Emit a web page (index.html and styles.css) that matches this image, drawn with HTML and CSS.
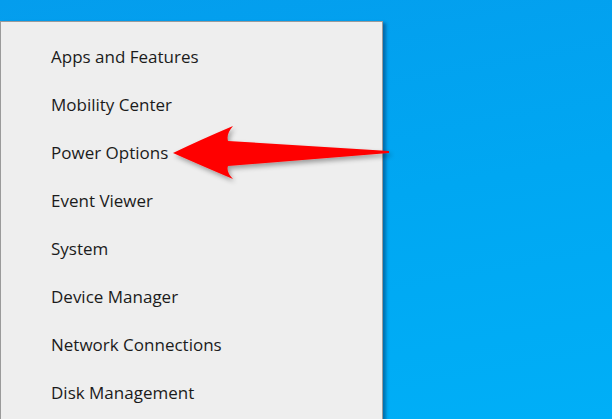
FILE: index.html
```html
<!DOCTYPE html>
<html>
<head>
<meta charset="utf-8">
<link rel="stylesheet" href="styles.css">
</head>
<body>
<div class="desktop">
  <div class="menu">
    <ul class="items">
      <li>Apps and Features</li>
      <li>Mobility Center</li>
      <li>Power Options</li>
      <li>Event Viewer</li>
      <li>System</li>
      <li>Device Manager</li>
      <li>Network Connections</li>
      <li>Disk Management</li>
    </ul>
  </div>
  <svg class="arrow" width="240" height="80" viewBox="0 0 240 80">
    <defs>
      <filter id="sh" x="-10%" y="-30%" width="120%" height="160%">
        <feGaussianBlur in="SourceAlpha" stdDeviation="2.5"/>
        <feOffset dx="2" dy="3" result="b"/>
        <feComponentTransfer><feFuncA type="linear" slope="0.35"/></feComponentTransfer>
        <feMerge><feMergeNode/><feMergeNode in="SourceGraphic"/></feMerge>
      </filter>
    </defs>
    <path filter="url(#sh)" fill="#ff0000" d="M13 43 Q40 30 73 16 Q66 24 68 31 L229 41 L229 43 L68 56 Q66 62 73 69 Q40 55 13 43 Z"/>
  </svg>
</div>
</body>
</html>
```
FILE: styles.css
```css
html, body {
  margin: 0;
  padding: 0;
}
.desktop {
  position: relative;
  width: 612px;
  height: 419px;
  overflow: hidden;
  background: linear-gradient(170deg, #049ded 0%, #00a7f2 50%, #00aff7 100%);
  padding-top: 21px;
  box-sizing: border-box;
}
.menu {
  width: 383px;
  height: 420px;
  box-sizing: border-box;
  background: #eeeeee;
  border: 1px solid #9a9a9a;
  border-bottom: none;
  box-shadow: 3px 2px 3px rgba(0, 40, 90, 0.45);
}
.items {
  list-style: none;
  margin: 0;
  padding: 11px 0 0 50px;
}
.items li {
  height: 48px;
  line-height: 48px;
  font-family: "Open Sans", "Noto Sans", sans-serif;
  font-size: 17px;
  color: #1b1b1b;
  white-space: nowrap;
}
.arrow {
  position: absolute;
  left: 160px;
  top: 110px;
}
```
